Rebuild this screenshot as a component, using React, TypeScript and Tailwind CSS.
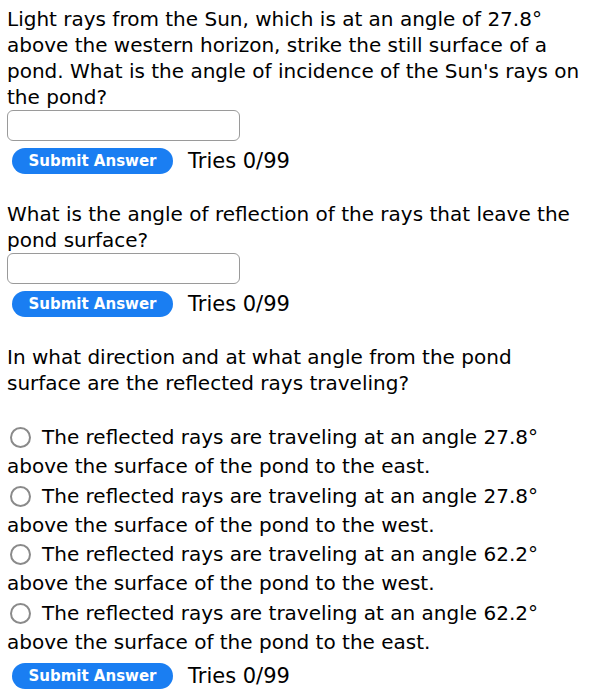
import React from "react";

const SubmitRow = () => (
  <div className="flex items-center">
    <button className="ml-[5px] h-[26px] w-[161px] rounded-full bg-[#1a7ef2] text-[15px] font-bold text-white">
      Submit Answer
    </button>
    <span className="ml-[15px] text-[21px]">Tries 0/99</span>
  </div>
);

const options = [
  "The reflected rays are traveling at an angle 27.8° above the surface of the pond to the east.",
  "The reflected rays are traveling at an angle 27.8° above the surface of the pond to the west.",
  "The reflected rays are traveling at an angle 62.2° above the surface of the pond to the west.",
  "The reflected rays are traveling at an angle 62.2° above the surface of the pond to the east.",
];

export default function App() {
  return (
    <div className="w-[591px] bg-white px-[7px] pt-[6px] font-['DejaVu_Sans',Verdana,sans-serif] text-[20px] leading-[26px] text-black">
      <p>
        Light rays from the Sun, which is at an angle of 27.8° above the western horizon, strike the still surface of a
        pond. What is the angle of incidence of the Sun's rays on the pond?
      </p>
      <input className="block h-[31px] w-[233px] rounded-[6px] border border-[#9a9a9a]" />
      <div className="mt-[7px]">
        <SubmitRow />
      </div>

      <p className="mt-[27px]">What is the angle of reflection of the rays that leave the pond surface?</p>
      <input className="block h-[31px] w-[233px] rounded-[6px] border border-[#9a9a9a]" />
      <div className="mt-[7px]">
        <SubmitRow />
      </div>

      <p className="mt-[27px] w-[545px]">
        In what direction and at what angle from the pond surface are the reflected rays traveling?
      </p>

      <div className="mt-[27px] flex flex-col">
        {options.map((o) => (
          <label key={o} className="block leading-[29.3px]">
            <span className="relative top-[4px] ml-[3px] mr-[11px] inline-block h-[21px] w-[21px] rounded-full border-2 border-[#8a8a8a]" />
            {o}
          </label>
        ))}
      </div>
      <div className="mt-[6px] pb-[10px]">
        <SubmitRow />
      </div>
    </div>
  );
}
